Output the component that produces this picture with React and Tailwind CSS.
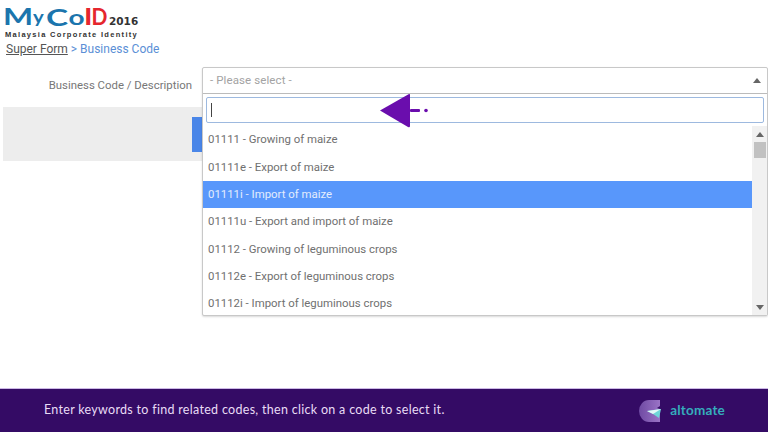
import React from 'react'

const codes = [
  '01111 - Growing of maize',
  '01111e - Export of maize',
  '01111i - Import of maize',
  '01111u - Export and import of maize',
  '01112 - Growing of leguminous crops',
  '01112e - Export of leguminous crops',
  '01112i - Import of leguminous crops',
]

function Logo() {
  return (
    <div className="h-[34px]">
      <div className="flex items-end h-[18px] font-['Lato'] font-bold leading-[18px] text-[#1b75ad]">
        <span className="w-[26px] text-center text-[22px] scale-x-[1.45]">M</span>
        <span className="w-[15px] text-center text-[17px] scale-x-[1.2]">y</span>
        <span className="w-[22px] text-center text-[23px] scale-x-[1.45]">C</span>
        <span className="w-[17px] text-center text-[20px] scale-x-[1.4]">o</span>
        <span className="w-[6px] text-center text-[22px] text-[#e5262e] scale-x-[1.3]">I</span>
        <span className="w-[15px] text-center text-[22px] text-[#e5262e] scale-x-[0.95]">D</span>
        <span className="ml-[3px] mb-[-2px] font-['DejaVu_Sans'] text-[10.5px] leading-[14px] font-bold text-[#333]">2016</span>
      </div>
      <div className="mt-[4px] font-['Liberation_Sans'] text-[7.5px] leading-[9px] font-bold tracking-[1.3px] text-[#333] whitespace-nowrap">
        Malaysia Corporate Identity
      </div>
    </div>
  )
}

function Caret({ up, className }) {
  return (
    <svg width="8" height="5" viewBox="0 0 8 5" className={className}>
      <path d={up ? 'M4 0 L8 5 L0 5 Z' : 'M0 0 L8 0 L4 5 Z'} fill="#666" />
    </svg>
  )
}

function BusinessDropdown() {
  return (
    <div className="absolute left-[202px] top-[67px] w-[566px] h-[249px] flex flex-col bg-white border border-[#c8c8c8] rounded-[2px] shadow-[0_1px_2px_rgba(0,0,0,0.15)]">
      <div className="h-[26px] shrink-0 flex items-center justify-between pl-[7px] pr-[6px] border-b border-[#bbb]">
        <span className="text-[11.5px] tracking-[0.1px] text-[#a3a3a3]">- Please select -</span>
        <Caret up />
      </div>
      <div className="shrink-0 px-[3px] pt-[3px] pb-[3px]">
        <div className="h-[26px] flex items-center pl-[4px] border-[1.5px] border-[#9db9df] rounded-[2px] bg-white">
          <span className="w-px h-[14px] bg-[#444]" />
        </div>
      </div>
      <div className="flex-1 flex min-h-0">
        <ul className="flex-1 overflow-hidden">
          {codes.map((code, i) => (
            <li
              key={code}
              className={`h-[27.4px] flex items-center pl-[5px] text-[11.4px] ${
                i === 2 ? 'bg-[#5897fb] text-[#e3edfd]' : 'text-[#707070]'
              }`}
            >
              {code}
            </li>
          ))}
        </ul>
        <div className="w-[15px] shrink-0 flex flex-col items-center bg-[#f1f1f1]">
          <Caret up className="mt-[6px]" />
          <div className="mt-[5px] w-[12px] h-[16px] bg-[#c1c1c1]" />
          <Caret className="mt-auto mb-[5px]" />
        </div>
      </div>
    </div>
  )
}

function PointerArrow() {
  return (
    <svg width="52" height="36" viewBox="0 0 52 36" className="absolute left-[379px] top-[93px]">
      <path d="M1 17.5 L30 1 Q31 0.5 31 2 L31 33 Q31 35 29 34 Z" fill="#6a0dad" />
      <rect x="31" y="16" width="10" height="3" rx="1" fill="#6a0dad" />
      <circle cx="47" cy="17.5" r="1.8" fill="#6a0dad" />
    </svg>
  )
}

function App() {
  return (
    <div className="relative w-[768px] h-[432px] flex flex-col overflow-hidden bg-white font-['Roboto',sans-serif]">
      <div className="flex-1 min-h-0 pt-[8px]">
        <div className="pl-[5px]">
          <Logo />
          <div className="pl-[1px] text-[12px] leading-[14px] whitespace-nowrap">
            <span className="text-[#555] underline">Super Form</span>
            <span className="text-[#5b8fd6]"> &gt; Business Code</span>
          </div>
        </div>
        <div className="mt-[21px] h-[18px] w-[192px] text-right text-[11.4px] leading-[16px] text-[#777]">
          Business Code / Description
        </div>
        <div className="mt-[12px] ml-[3px] h-[54px] bg-[#ededed] pt-[10px] pl-[189px]">
          <div className="w-[12px] h-[35px] bg-[#4a86e8]" />
        </div>
      </div>

      <BusinessDropdown />
      <PointerArrow />

      <div className="h-[44px] shrink-0 flex items-center justify-between pl-[44px] pr-[43px] bg-[#340b65] border-t border-[#cdb8e6]">
        <span className="font-['Lato'] text-[12.5px] tracking-[0.3px] text-[#e9dcf5]">
          Enter keywords to find related codes, then click on a code to select it.
        </span>
        <div className="flex items-center gap-[9px]">
          <svg width="22" height="22" viewBox="0 0 22 22">
            <defs>
              <linearGradient id="altomateBody" x1="0" y1="0" x2="1" y2="0">
                <stop offset="0" stopColor="#6f4aa3" />
                <stop offset="1" stopColor="#9a73c6" />
              </linearGradient>
            </defs>
            <path d="M21 0 H10 A10 11 0 0 0 10 22 H21 V9 L18 8 L21 6 Z" fill="url(#altomateBody)" />
            <path d="M8 11 L22 9 L20 18 L14 14 Z" fill="#6fd6d8" />
            <path d="M8 11 L22 9 L14 14 Z" fill="#e4f8f8" />
          </svg>
          <span className="font-['Lato'] text-[13.5px] font-bold tracking-[0.2px] text-[#35adbc]">altomate</span>
        </div>
      </div>
    </div>
  )
}

export default App
